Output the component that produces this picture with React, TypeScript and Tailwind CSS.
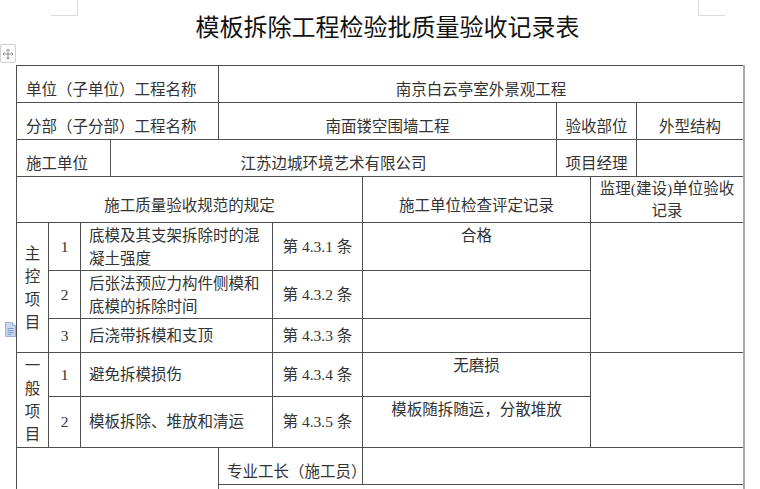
import React from 'react';

const cell = 'bg-white flex items-center text-[15.5px] leading-none text-[#333]';

// vertical group label, one char per line
const Stack = ({ text }: { text: string }) => (
  <div className="flex flex-col items-center leading-[23px]">
    {text.split('').map((c, i) => (
      <span key={i}>{c}</span>
    ))}
  </div>
);

const App = () => {
  return (
    <div className="relative w-[760px] h-[489px] overflow-hidden bg-white font-['Liberation_Serif','Noto_Sans_CJK_SC',serif]">
      {/* page corner marks */}
      <div className="absolute left-[51px] top-0 w-[27px] h-[16px] border-r border-b border-[#dcdcdc]" />
      <div className="absolute left-[698px] top-0 w-[27px] h-[16px] border-l border-b border-[#dcdcdc]" />

      {/* table move handle */}
      <div className="absolute left-0 top-[44px] w-[16px] h-[19px] border border-[#cfcfcf] rounded-[2px] bg-white flex items-center justify-center">
        <svg width="12" height="12" viewBox="0 0 12 12" fill="none" stroke="#8a8a8a" strokeWidth="1">
          <path d="M6 1v10M1 6h10" />
          <path d="M4.5 2.5 6 1l1.5 1.5M4.5 9.5 6 11l1.5-1.5M2.5 4.5 1 6l1.5 1.5M9.5 4.5 11 6l-1.5 1.5" />
        </svg>
      </div>

      {/* side doc marker */}
      <svg className="absolute left-[5px] top-[322px]" width="11" height="15" viewBox="0 0 11 15">
        <path d="M0.5 0.5h7l3 3v11h-10z" fill="#c9d8ee" stroke="#9bb3d8" />
        <path d="M7.5 0.5v3h3" fill="#e6eef9" stroke="#9bb3d8" />
        <path d="M2.5 6.5h6M2.5 8.5h6M2.5 10.5h6M2.5 12.5h4" stroke="#7d9ccb" />
      </svg>

      {/* title */}
      <div className="h-[65px] pt-[14px] pl-[15px] text-center text-[24px] leading-none font-normal text-[#111] font-['Noto_Sans_CJK_SC',sans-serif]">
        模板拆除工程检验批质量验收记录表
      </div>

      {/* record table */}
      <div className="ml-[16px] w-[729px] grid grid-cols-[31px_31px_29px_107px_53px_89px_193px_33px_45px_106px] grid-rows-[36px_36px_36px_45px_47px_47px_33px_43px_50px_36px_40px] gap-px bg-[#4f4f4f] pt-px pl-px border-r-2 border-[#a8a8a8]">
        {/* basic info */}
        <div className={`${cell} col-start-1 col-span-4 row-start-1 pl-[9px] pt-[11px]`}>单位（子单位）工程名称</div>
        <div className={`${cell} col-start-5 col-span-6 row-start-1 justify-center pt-[11px]`}>南京白云亭室外景观工程</div>

        <div className={`${cell} col-start-1 col-span-4 row-start-2 pl-[9px] pt-[11px]`}>分部（子分部）工程名称</div>
        <div className={`${cell} col-start-5 col-span-3 row-start-2 justify-center pt-[11px]`}>南面镂空围墙工程</div>
        <div className={`${cell} col-start-8 col-span-2 row-start-2 justify-center pt-[11px]`}>验收部位</div>
        <div className={`${cell} col-start-10 row-start-2 justify-center pt-[11px]`}>外型结构</div>

        <div className={`${cell} col-start-1 col-span-3 row-start-3 pl-[9px] pt-[11px]`}>施工单位</div>
        <div className={`${cell} col-start-4 col-span-4 row-start-3 justify-center pt-[11px]`}>江苏边城环境艺术有限公司</div>
        <div className={`${cell} col-start-8 col-span-2 row-start-3 justify-center pt-[11px]`}>项目经理</div>
        <div className={`${cell} col-start-10 row-start-3`} />

        {/* header */}
        <div className={`${cell} col-start-1 col-span-6 row-start-4 justify-center pt-[12px]`}>施工质量验收规范的规定</div>
        <div className={`${cell} col-start-7 col-span-2 row-start-4 justify-center pt-[12px]`}>施工单位检查评定记录</div>
        <div className={`${cell} col-start-9 col-span-2 row-start-4 justify-center`}>
          <div className="flex flex-col items-center leading-[22px]">
            <span>监理(建设)单位验收</span>
            <span>记录</span>
          </div>
        </div>

        {/* main control items */}
        <div className={`${cell} col-start-1 row-start-5 row-span-3 justify-center`}>
          <Stack text="主控项目" />
        </div>
        <div className={`${cell} col-start-2 row-start-5 justify-center`}>1</div>
        <div className={`${cell} col-start-3 col-span-3 row-start-5 pl-[8px]`}>
          <p className="leading-[23px]">
            底模及其支架拆除时的混
            <br />
            凝土强度
          </p>
        </div>
        <div className={`${cell} col-start-6 row-start-5 justify-center`}>第 4.3.1 条</div>
        <div className={`${cell} col-start-7 col-span-2 row-start-5 items-start justify-center pt-[5px]`}>合格</div>

        <div className={`${cell} col-start-2 row-start-6 justify-center`}>2</div>
        <div className={`${cell} col-start-3 col-span-3 row-start-6 pl-[8px]`}>
          <p className="leading-[23px]">
            后张法预应力构件侧模和
            <br />
            底模的拆除时间
          </p>
        </div>
        <div className={`${cell} col-start-6 row-start-6 justify-center`}>第 4.3.2 条</div>
        <div className={`${cell} col-start-7 col-span-2 row-start-6`} />

        <div className={`${cell} col-start-2 row-start-7 justify-center`}>3</div>
        <div className={`${cell} col-start-3 col-span-3 row-start-7 pl-[8px]`}>后浇带拆模和支顶</div>
        <div className={`${cell} col-start-6 row-start-7 justify-center`}>第 4.3.3 条</div>
        <div className={`${cell} col-start-7 col-span-2 row-start-7`} />

        <div className={`${cell} col-start-9 col-span-2 row-start-5 row-span-3`} />

        {/* general items */}
        <div className={`${cell} col-start-1 row-start-8 row-span-2 justify-center`}>
          <Stack text="一般项目" />
        </div>
        <div className={`${cell} col-start-2 row-start-8 justify-center`}>1</div>
        <div className={`${cell} col-start-3 col-span-3 row-start-8 pl-[8px]`}>避免拆模损伤</div>
        <div className={`${cell} col-start-6 row-start-8 justify-center`}>第 4.3.4 条</div>
        <div className={`${cell} col-start-7 col-span-2 row-start-8 items-start justify-center pt-[5px]`}>无磨损</div>

        <div className={`${cell} col-start-2 row-start-9 justify-center`}>2</div>
        <div className={`${cell} col-start-3 col-span-3 row-start-9 pl-[8px]`}>模板拆除、堆放和清运</div>
        <div className={`${cell} col-start-6 row-start-9 justify-center`}>第 4.3.5 条</div>
        <div className={`${cell} col-start-7 col-span-2 row-start-9 items-start justify-center pt-[5px]`}>模板随拆随运，分散堆放</div>

        <div className={`${cell} col-start-9 col-span-2 row-start-8 row-span-2`} />

        {/* sign-off */}
        <div className={`${cell} col-start-1 col-span-4 row-start-10 row-span-2`} />
        <div className={`${cell} col-start-5 col-span-2 row-start-10 pl-[8px] pt-[11px]`}>专业工长（施工员）</div>
        <div className={`${cell} col-start-7 col-span-4 row-start-10`} />
        <div className={`${cell} col-start-5 col-span-6 row-start-11`} />
      </div>
    </div>
  );
};

export default App;
